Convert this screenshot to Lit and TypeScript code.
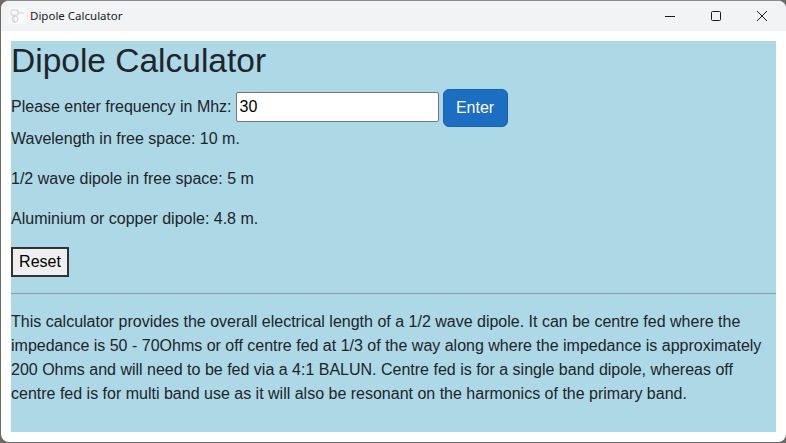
import { LitElement, html, css } from "lit";
import { customElement } from "lit/decorators.js";

@customElement("app-root")
export class AppRoot extends LitElement {
  static styles = css`
    :host { display: block; height: 443px; background: #6f6a66; font-family: "Liberation Sans", Arial, sans-serif; overflow: hidden; }
    .win { box-sizing: border-box; height: 442px; margin: 0 0 0 1px; width: 785px; background: #fff; border-radius: 8px; overflow: hidden; display: flex; flex-direction: column; border-top: 1px solid #8a8a8a; }
    .bar { height: 30px; flex: none; background: #f2f3f4; display: flex; align-items: center; }
    .app-icon { width: 16px; height: 16px; margin-left: 8px; background: #fafafa; flex: none; }
    .app-title { margin: 0 0 1px 5px; font: 11.5px "Noto Sans", "Open Sans", sans-serif; color: #1a1a1a; flex: 1; }
    .ctl { width: 46px; height: 30px; display: flex; align-items: center; justify-content: center; flex: none; }
    .ctl svg { width: 12px; height: 12px; }
    .ctl path, .ctl rect { fill: none; stroke: #1a1a1a; stroke-width: 1; }
    .ctls { display: flex; margin-right: 1px; }
    .content { flex: 1; padding: 10px 10px 10px 10px; display: flex; min-height: 0; }
    .page { flex: 1; background: #add8e6; color: #212529; font-size: 16px; line-height: 24px; }
    h1 { margin: 0; font-weight: 400; font-size: 33.5px; line-height: 39px; }
    .form { display: flex; align-items: center; height: 38px; margin-top: 9px; }
    label { white-space: pre; margin-bottom: 2px; }
    input { box-sizing: border-box; width: 203px; height: 30px; margin: 0 4px 2px 4px; padding: 1px 3px; font: 16px "Liberation Sans", Arial, sans-serif; color: #000; background: #fff; border: 1px solid #767676; border-radius: 2px; outline: none; }
    .enter { box-sizing: border-box; width: 65px; height: 38px; padding: 0; font: 16px "Liberation Sans", Arial, sans-serif; color: #fff; background: #1b6ec2; border: 1px solid #1861ac; border-radius: 6px; }
    p { margin: 0 0 16px 0; }
    .results { margin-top: 0; }
    .reset { display: block; box-sizing: border-box; width: 58px; height: 30px; padding: 0; font: 16px "Liberation Sans", Arial, sans-serif; color: #000; background: #efefef; border: 2px solid #333; }
    hr { margin: 16px 0; border: 0; border-top: 1px solid #7d9eaa; }
    .desc { margin: 0; line-height: 24px; }
  `;

  render() {
    return html`<div class="win">
      <div class="bar">
        <svg class="app-icon" viewBox="0 0 16 16"><path d="M2 2h7v5H2zM5 7v8M9 5h6M3 11a3 3 0 1 0 6 0a3 3 0 1 0-6 0" fill="none" stroke="#d0d0d0" stroke-width="1"/></svg>
        <div class="app-title">Dipole Calculator</div>
        <div class="ctls">
          <div class="ctl"><svg viewBox="0 0 12 12"><path d="M1 6.5h10"/></svg></div>
          <div class="ctl"><svg viewBox="0 0 12 12"><rect x="1.5" y="1.5" width="9" height="9" rx="1"/></svg></div>
          <div class="ctl"><svg viewBox="0 0 12 12"><path d="M1 1l10 10M11 1L1 11"/></svg></div>
        </div>
      </div>
      <div class="content">
        <div class="page">
          <h1>Dipole Calculator</h1>
          <div class="form">
            <label>Please enter frequency in Mhz:</label>
            <input .value=${"30"} />
            <button class="enter">Enter</button>
          </div>
          <div class="results">
            <p>Wavelength in free space: 10 m.</p>
            <p>1/2 wave dipole in free space: 5 m</p>
            <p>Aluminium or copper dipole: 4.8 m.</p>
          </div>
          <button class="reset">Reset</button>
          <hr />
          <p class="desc">This calculator provides the overall electrical length of a 1/2 wave dipole. It can be centre fed where the impedance is 50 - 70Ohms or off centre fed at 1/3 of the way along where the impedance is approximately 200 Ohms and will need to be fed via a 4:1 BALUN. Centre fed is for a single band dipole, whereas off centre fed is for multi band use as it will also be resonant on the harmonics of the primary band.</p>
        </div>
      </div>
    </div>`;
  }
}
